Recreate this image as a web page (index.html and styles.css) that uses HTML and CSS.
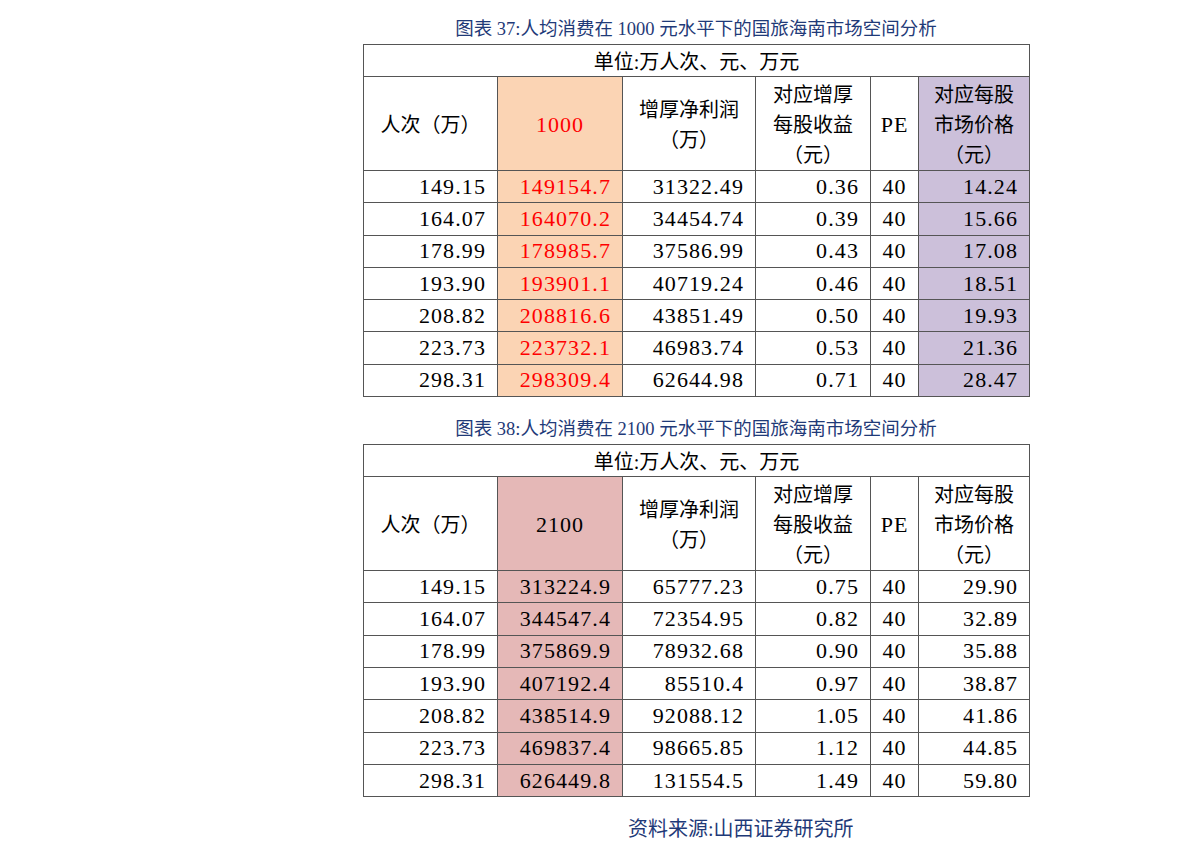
FILE: index.html
```html
<!DOCTYPE html>
<html lang="zh-CN">
<head>
  <meta charset="UTF-8">
  <meta name="viewport" content="width=device-width, initial-scale=1.0">
  <title>国旅海南市场空间分析</title>
  <link rel="stylesheet" href="styles.css">
</head>
<body>
  <div class="page">
    <div class="figure">
      <h2 class="fig-title">图表 37:人均消费在 1000 元水平下的国旅海南市场空间分析</h2>
      <table class="data">
        <colgroup>
          <col class="c1"><col class="c2"><col class="c3"><col class="c4"><col class="c5"><col class="c6">
        </colgroup>
        <thead>
          <tr class="unit"><td colspan="6">单位:万人次、元、万元</td></tr>
          <tr class="head">
            <th>人次（万）</th>
            <th class="peach red num">1000</th>
            <th>增厚净利润<br>（万）</th>
            <th>对应增厚<br>每股收益<br>（元）</th>
            <th class="num">PE</th>
            <th class="lav">对应每股<br>市场价格<br>（元）</th>
          </tr>
        </thead>
        <tbody>
          <tr><td>149.15</td><td class="peach red">149154.7</td><td>31322.49</td><td>0.36</td><td class="pe">40</td><td class="lav">14.24</td></tr>
          <tr><td>164.07</td><td class="peach red">164070.2</td><td>34454.74</td><td>0.39</td><td class="pe">40</td><td class="lav">15.66</td></tr>
          <tr><td>178.99</td><td class="peach red">178985.7</td><td>37586.99</td><td>0.43</td><td class="pe">40</td><td class="lav">17.08</td></tr>
          <tr><td>193.90</td><td class="peach red">193901.1</td><td>40719.24</td><td>0.46</td><td class="pe">40</td><td class="lav">18.51</td></tr>
          <tr><td>208.82</td><td class="peach red">208816.6</td><td>43851.49</td><td>0.50</td><td class="pe">40</td><td class="lav">19.93</td></tr>
          <tr><td>223.73</td><td class="peach red">223732.1</td><td>46983.74</td><td>0.53</td><td class="pe">40</td><td class="lav">21.36</td></tr>
          <tr><td>298.31</td><td class="peach red">298309.4</td><td>62644.98</td><td>0.71</td><td class="pe">40</td><td class="lav">28.47</td></tr>
        </tbody>
      </table>
    </div>

    <div class="figure">
      <h2 class="fig-title">图表 38:人均消费在 2100 元水平下的国旅海南市场空间分析</h2>
      <table class="data">
        <colgroup>
          <col class="c1"><col class="c2"><col class="c3"><col class="c4"><col class="c5"><col class="c6">
        </colgroup>
        <thead>
          <tr class="unit"><td colspan="6">单位:万人次、元、万元</td></tr>
          <tr class="head">
            <th>人次（万）</th>
            <th class="rose num">2100</th>
            <th>增厚净利润<br>（万）</th>
            <th>对应增厚<br>每股收益<br>（元）</th>
            <th class="num">PE</th>
            <th>对应每股<br>市场价格<br>（元）</th>
          </tr>
        </thead>
        <tbody>
          <tr><td>149.15</td><td class="rose">313224.9</td><td>65777.23</td><td>0.75</td><td class="pe">40</td><td>29.90</td></tr>
          <tr><td>164.07</td><td class="rose">344547.4</td><td>72354.95</td><td>0.82</td><td class="pe">40</td><td>32.89</td></tr>
          <tr><td>178.99</td><td class="rose">375869.9</td><td>78932.68</td><td>0.90</td><td class="pe">40</td><td>35.88</td></tr>
          <tr><td>193.90</td><td class="rose">407192.4</td><td>85510.4</td><td>0.97</td><td class="pe">40</td><td>38.87</td></tr>
          <tr><td>208.82</td><td class="rose">438514.9</td><td>92088.12</td><td>1.05</td><td class="pe">40</td><td>41.86</td></tr>
          <tr><td>223.73</td><td class="rose">469837.4</td><td>98665.85</td><td>1.12</td><td class="pe">40</td><td>44.85</td></tr>
          <tr><td>298.31</td><td class="rose">626449.8</td><td>131554.5</td><td>1.49</td><td class="pe">40</td><td>59.80</td></tr>
        </tbody>
      </table>
    </div>

    <p class="source">资料来源:山西证券研究所</p>
  </div>
</body>
</html>
```

FILE: styles.css
```css
body {
  margin: 0;
  background-color: #fff;
  color: #000;
  font-family: "Liberation Serif", "Noto Sans CJK SC", serif;
}

.page {
  padding: 17px 0 0 363px;
}

.figure {
  width: 666px;
  margin-bottom: 20px;
}

.fig-title {
  margin: 0 0 3px;
  font-size: 18.5px;
  line-height: 24px;
  font-weight: normal;
  text-align: center;
  color: #1f3a78;
}

.data {
  width: 666px;
  border-collapse: collapse;
  table-layout: fixed;
}

.data .c1 { width: 134px; }
.data .c2 { width: 125px; }
.data .c3 { width: 133px; }
.data .c4 { width: 115px; }
.data .c5 { width: 48px; }
.data .c6 { width: 111px; }

.data td,
.data th {
  border: 1px solid #555;
  padding: 0 11px 0 4px;
  font-size: 20px;
  font-weight: normal;
  white-space: nowrap;
}

.data .unit td {
  height: 31px;
  padding: 0;
  text-align: center;
}

.data .head th {
  height: 90px;
  padding: 3px 0 0;
  line-height: 30px;
  text-align: center;
}

.data tbody td {
  height: 31.3px;
  text-align: right;
  font-size: 22px;
  letter-spacing: 1.1px;
}

.data .head .num {
  font-size: 22px;
  letter-spacing: 1px;
}

.data tbody .pe {
  padding: 0;
  text-align: center;
}

.peach { background-color: #fbd4b4; }
.rose { background-color: #e5b8b7; }
.lav { background-color: #ccc0da; }
.red { color: #ff0000; }

.source {
  margin: 0;
  padding-left: 265px;
  font-size: 20px;
  line-height: 24px;
  color: #1f3a78;
}
```
